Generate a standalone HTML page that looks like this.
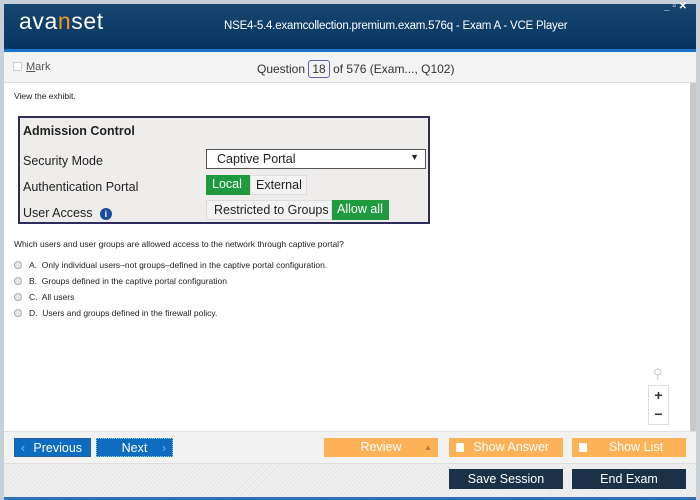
<!DOCTYPE html>
<html><head><meta charset="utf-8"><style>
*{margin:0;padding:0;box-sizing:border-box}
body{width:700px;height:500px;background:#c5d0d8;position:relative;overflow:hidden;font-family:"Liberation Sans",sans-serif}
.abs{position:absolute}
#hdr{left:4px;top:4px;width:692px;height:45px;background:linear-gradient(#17466f,#073563)}
#line{left:4px;top:49px;width:692px;height:3px;background:#1a75c8}
#tb{left:4px;top:52px;width:692px;height:31px;background:#f3f3f3;border-bottom:1px solid #dcdcdc}
#content{left:4px;top:83px;width:686px;height:348px;background:#fff}
#sb{left:690px;top:83px;width:6px;height:348px;background:#c8c8c8}
#btnbar{left:4px;top:431px;width:692px;height:33px;background:#f2f2f2;border-top:1px solid #e0e0e0;border-bottom:1px solid #ddd}
#bot{left:4px;top:464px;width:692px;height:33px;background:repeating-linear-gradient(135deg,#e6e6e6 0 1px,#f0f0f0 1px 3px)}
#botline{left:4px;top:497px;width:692px;height:3px;background:#2c6fb3}
.btn{position:absolute;height:19px;color:#fff;font-size:12.5px;text-align:center;line-height:19px}
.ex{left:18px;top:116px;width:412px;height:108px;background:#efedeb;border:2px solid #2c2d5a;font-family:"Liberation Sans",sans-serif;color:#222}
.ex div{position:absolute;white-space:nowrap}
.opt{position:absolute;left:14px;font-size:8.5px;color:#222}
.opt i{display:inline-block;width:8px;height:8px;border-radius:50%;border:1px solid #aaa;background:#e8e8e8;vertical-align:-1px;margin-right:7px}
</style></head><body>
<div id="hdr" class="abs"></div>
<div class="abs" style="left:19px;top:8px;color:#fff;font-size:23px;letter-spacing:0.6px;font-family:'Liberation Sans',sans-serif">ava<span style="color:#f39a1e">n</span>set</div>
<div class="abs" style="left:224px;top:20px;color:#fff;font-size:11.5px;letter-spacing:-0.2px">NSE4-5.4.examcollection.premium.exam.576q - Exam A - VCE Player</div>
<div class="abs" style="left:664px;top:1px;color:#fff;font-size:10px;font-weight:bold">_ ▫ ✕</div>
<div id="line" class="abs"></div>
<div id="tb" class="abs"></div>
<div class="abs" style="left:13px;top:62px;width:9px;height:9px;border:1px solid #ccc;background:#fff"></div>
<div class="abs" style="left:26px;top:61px;font-size:11px;color:#555"><u>M</u>ark</div>
<div class="abs" style="left:257px;top:60px;font-size:12px;color:#333">Question <span style="display:inline-block;border:1px solid #5a6aa0;border-radius:3px;padding:1px 3px">18</span> of 576 (Exam..., Q102)</div>
<div id="content" class="abs"></div>
<div id="sb" class="abs"></div>
<div class="abs" style="left:14px;top:91px;font-size:8.5px;color:#222">View the exhibit.</div>
<div class="abs ex">
<div style="left:3px;top:6px;font-size:12.5px;font-weight:bold">Admission Control</div>
<div style="left:3px;top:36px;font-size:12.5px">Security Mode</div>
<div style="left:3px;top:62px;font-size:12.5px">Authentication Portal</div>
<div style="left:3px;top:88px;font-size:12.5px">User Access <span style="display:inline-block;margin-left:4px;width:12px;height:12px;border-radius:50%;background:#1a4d9c;color:#fff;font-size:9px;text-align:center;line-height:12px;font-weight:bold">i</span></div>
<div style="left:186px;top:31px;width:220px;height:20px;background:#fff;border:1px solid #555;font-size:12.5px;padding:2px 10px">Captive Portal<span style="position:absolute;right:6px;top:2px;font-size:9px">▼</span></div>
<div style="left:186px;top:57px;width:44px;height:20px;background:#1f9a3e;color:#fff;font-size:12.5px;padding:2px 6px">Local</div>
<div style="left:230px;top:57px;width:57px;height:20px;background:#f3f3f3;border:1px solid #ddd;font-size:12.5px;padding:2px 5px">External</div>
<div style="left:186px;top:82px;width:126px;height:20px;background:#f3f3f3;border:1px solid #ddd;font-size:12.5px;padding:2px 7px">Restricted to Groups</div>
<div style="left:312px;top:82px;width:57px;height:20px;background:#1f9a3e;color:#fff;font-size:12.5px;padding:2px 5px">Allow all</div>
</div>
<div class="abs" style="left:14px;top:239px;font-size:8.5px;color:#222">Which users and user groups are allowed access to the network through captive portal?</div>
<div class="opt" style="top:260px"><i></i>A.&nbsp; Only individual users–not groups–defined in the captive portal configuration.</div>
<div class="opt" style="top:276px"><i></i>B.&nbsp; Groups defined in the captive portal configuration</div>
<div class="opt" style="top:292px"><i></i>C.&nbsp; All users</div>
<div class="opt" style="top:308px"><i></i>D.&nbsp; Users and groups defined in the firewall policy.</div>
<div class="abs" style="left:653px;top:366px;color:#ccc;font-size:13px">⚲</div>
<div class="abs" style="left:648px;top:385px;width:21px;height:40px;background:#fff;border:1px solid #ddd;font-size:14px;text-align:center;line-height:19px;font-weight:bold;color:#333">+<br>−</div>
<div id="btnbar" class="abs"></div>
<div class="btn" style="left:14px;top:438px;width:77px;background:#0d6cc0;border:1px solid #2c5fa0"><span style="position:absolute;left:6px;color:#7fb6ff">‹</span>&nbsp;&nbsp;&nbsp;Previous</div>
<div class="btn" style="left:96px;top:438px;width:77px;background:#0d6cc0;border:1px dotted #9cc"><span>Next</span><span style="position:absolute;right:6px;color:#7fb6ff">›</span></div>
<div class="btn" style="left:324px;top:438px;width:114px;background:#fdb257">Review<span style="position:absolute;right:6px;color:#b07a3a;font-size:8px">▲</span></div>
<div class="btn" style="left:449px;top:438px;width:114px;background:#fdb257"><span style="position:absolute;left:7px;top:5px;width:8px;height:9px;background:#fff"></span>&nbsp;&nbsp;&nbsp;Show Answer</div>
<div class="btn" style="left:572px;top:438px;width:114px;background:#fdb257"><span style="position:absolute;left:7px;top:5px;width:8px;height:9px;background:#fff"></span>&nbsp;&nbsp;&nbsp;&nbsp;Show List</div>
<div id="bot" class="abs"></div>
<div class="btn" style="left:449px;top:469px;width:114px;height:20px;line-height:20px;background:#1b3148">Save Session</div>
<div class="btn" style="left:572px;top:469px;width:114px;height:20px;line-height:20px;background:#1b3148">End Exam</div>
<div id="botline" class="abs"></div>
</body></html>
